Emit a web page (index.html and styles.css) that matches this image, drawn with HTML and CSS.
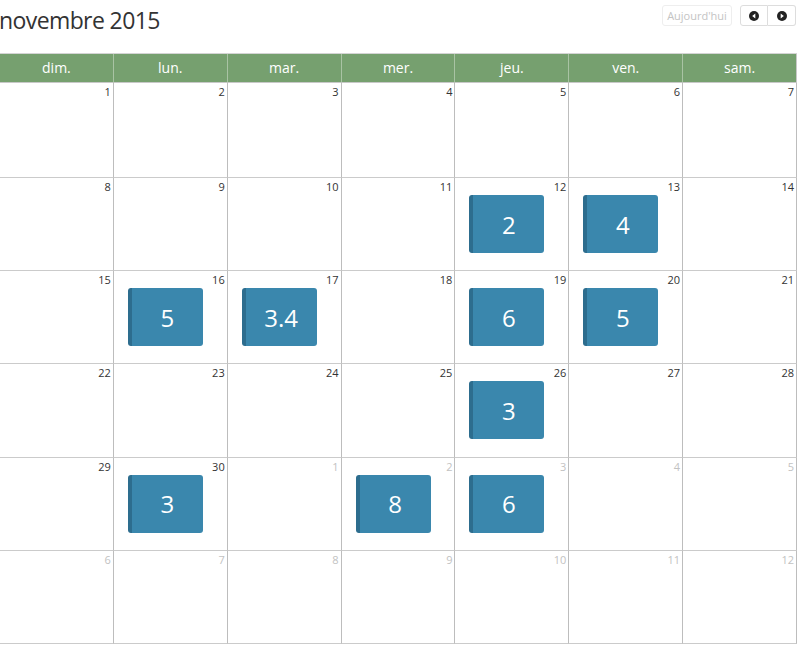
FILE: index.html
```html
<!DOCTYPE html>
<html lang="fr">
<head>
<meta charset="utf-8">
<title>novembre 2015</title>
<link rel="stylesheet" href="styles.css">
</head>
<body>
<div class="calendar">
  <div class="toolbar">
    <h2 class="title">novembre 2015</h2>
    <div class="actions">
      <button class="btn btn-today" disabled>Aujourd'hui</button>
      <div class="btn-group">
        <button class="btn btn-nav" aria-label="précédent">
          <svg width="10" height="10" viewBox="0 0 10 10"><circle cx="5" cy="5" r="5" fill="#222"/><path d="M6.3 2.6 L3.2 5 L6.3 7.4 Z" fill="#fff"/></svg>
        </button>
        <button class="btn btn-nav" aria-label="suivant">
          <svg width="10" height="10" viewBox="0 0 10 10"><circle cx="5" cy="5" r="5" fill="#222"/><path d="M3.7 2.6 L6.8 5 L3.7 7.4 Z" fill="#fff"/></svg>
        </button>
      </div>
    </div>
  </div>

  <div class="grid">
    <div class="head">dim.</div><div class="head">lun.</div><div class="head">mar.</div><div class="head">mer.</div><div class="head">jeu.</div><div class="head">ven.</div><div class="head">sam.</div>

    <div class="day"><span class="num">1</span></div>
    <div class="day"><span class="num">2</span></div>
    <div class="day"><span class="num">3</span></div>
    <div class="day"><span class="num">4</span></div>
    <div class="day"><span class="num">5</span></div>
    <div class="day"><span class="num">6</span></div>
    <div class="day"><span class="num">7</span></div>

    <div class="day"><span class="num">8</span></div>
    <div class="day"><span class="num">9</span></div>
    <div class="day"><span class="num">10</span></div>
    <div class="day"><span class="num">11</span></div>
    <div class="day"><span class="num">12</span><div class="event">2</div></div>
    <div class="day"><span class="num">13</span><div class="event">4</div></div>
    <div class="day"><span class="num">14</span></div>

    <div class="day"><span class="num">15</span></div>
    <div class="day"><span class="num">16</span><div class="event">5</div></div>
    <div class="day"><span class="num">17</span><div class="event">3.4</div></div>
    <div class="day"><span class="num">18</span></div>
    <div class="day"><span class="num">19</span><div class="event">6</div></div>
    <div class="day"><span class="num">20</span><div class="event">5</div></div>
    <div class="day"><span class="num">21</span></div>

    <div class="day"><span class="num">22</span></div>
    <div class="day"><span class="num">23</span></div>
    <div class="day"><span class="num">24</span></div>
    <div class="day"><span class="num">25</span></div>
    <div class="day"><span class="num">26</span><div class="event">3</div></div>
    <div class="day"><span class="num">27</span></div>
    <div class="day"><span class="num">28</span></div>

    <div class="day"><span class="num">29</span></div>
    <div class="day"><span class="num">30</span><div class="event">3</div></div>
    <div class="day other"><span class="num">1</span></div>
    <div class="day other"><span class="num">2</span><div class="event">8</div></div>
    <div class="day other"><span class="num">3</span><div class="event">6</div></div>
    <div class="day other"><span class="num">4</span></div>
    <div class="day other"><span class="num">5</span></div>

    <div class="day other"><span class="num">6</span></div>
    <div class="day other"><span class="num">7</span></div>
    <div class="day other"><span class="num">8</span></div>
    <div class="day other"><span class="num">9</span></div>
    <div class="day other"><span class="num">10</span></div>
    <div class="day other"><span class="num">11</span></div>
    <div class="day other"><span class="num">12</span></div>
  </div>
</div>
</body>
</html>
```

FILE: styles.css
```css
* { box-sizing: border-box; }

html, body {
  margin: 0;
  padding: 0;
  background: #fff;
  font-family: "Open Sans", "Noto Sans", sans-serif;
  color: #333;
}

.calendar {
  width: 798px;
  margin-left: -1px;
}

.toolbar {
  height: 53px;
  display: flex;
  justify-content: space-between;
  align-items: flex-start;
}

.title {
  margin: 8px 0 0 0;
  font-size: 23px;
  font-weight: 400;
  letter-spacing: -0.6px;
  line-height: 1.1;
  color: #333;
}

.actions {
  display: flex;
  gap: 8px;
  margin-top: 5px;
  margin-right: 1px;
}

.btn {
  font-family: inherit;
  background: #fff;
  border: 1px solid #ddd;
  border-radius: 3px;
  height: 21px;
  padding: 0;
  margin: 0;
  display: flex;
  align-items: center;
  justify-content: center;
}

.btn-today {
  width: 70px;
  font-size: 11px;
  color: #c4c4c4;
  border-color: #eee;
}

.btn-group {
  display: flex;
}

.btn-nav {
  width: 28px;
}

.btn-group .btn-nav:first-child {
  border-radius: 3px 0 0 3px;
}

.btn-group .btn-nav:last-child {
  border-radius: 0 3px 3px 0;
  border-left: none;
}

.grid {
  display: grid;
  grid-template-columns: repeat(7, 1fr);
  grid-template-rows: 29px 95px repeat(5, 93.2px);
  border-left: 1px solid #c8c8c8;
  border-top: 1px solid #d4d4d4;
}

.head {
  background: #76a06f;
  color: #fff;
  font-size: 14px;
  text-align: center;
  line-height: 28px;
  border-right: 1px solid #a9c3a4;
  border-bottom: 1px solid #c8c8c8;
}

.head:nth-child(7) {
  border-right-color: #c8c8c8;
}

.day {
  border-right: 1px solid #bdbdbd;
  border-bottom: 1px solid #cbcbcb;
  display: flex;
  flex-direction: column;
  align-items: flex-start;
}

.num {
  align-self: flex-end;
  font-size: 11px;
  line-height: 15px;
  padding: 1px 2px 0 0;
  color: #333;
}

.other .num {
  color: #c2c2c2;
}

.event {
  margin: 1px 0 0 14px;
  width: 75px;
  height: 58px;
  background: #3a87ad;
  border-left: 4px solid #2d6d8e;
  border-radius: 3px;
  color: #fff;
  font-size: 24px;
  display: flex;
  align-items: center;
  justify-content: center;
}
```
